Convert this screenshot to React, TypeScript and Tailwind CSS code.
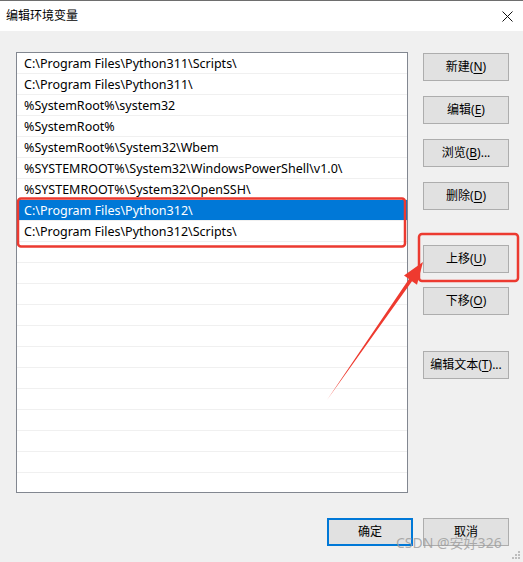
import React from 'react';

const paths = [
  'C:\\Program Files\\Python311\\Scripts\\',
  'C:\\Program Files\\Python311\\',
  '%SystemRoot%\\system32',
  '%SystemRoot%',
  '%SystemRoot%\\System32\\Wbem',
  '%SYSTEMROOT%\\System32\\WindowsPowerShell\\v1.0\\',
  '%SYSTEMROOT%\\System32\\OpenSSH\\',
  'C:\\Program Files\\Python312\\',
  'C:\\Program Files\\Python312\\Scripts\\',
];

const SELECTED = 7;

function Btn({ label, keyChar, tail = '', primary = false }: { label: string; keyChar?: string; tail?: string; primary?: boolean }) {
  return (
    <button
      className={`h-[28px] w-[86px] flex items-center justify-center bg-[#e1e1e1] text-[12px] text-black ${
        primary ? 'border-2 border-[#0078d7]' : 'border border-[#adadad]'
      }`}
    >
      {label}
      {keyChar && (
        <>
          (<span className="underline underline-offset-2">{keyChar}</span>){tail}
        </>
      )}
    </button>
  );
}

export default function App() {
  const rows = Array.from({ length: 21 }, (_, i) => paths[i] ?? '');

  return (
    <div
      className="relative w-[523px] h-[562px] bg-[#f0f0f0] overflow-hidden select-none"
      style={{ fontFamily: '"Noto Sans", "Noto Sans CJK SC", sans-serif' }}
    >
      {/* title bar */}
      <div className="h-[31px] bg-white border-t border-[#6e6e6e] flex items-center justify-between pl-[6px] pr-[10px]">
        <span className="text-[12px] text-black leading-none">编辑环境变量</span>
        <svg width="11" height="11" viewBox="0 0 11 11">
          <path d="M0.5 0.5 L10.5 10.5 M10.5 0.5 L0.5 10.5" stroke="#111" strokeWidth="1" />
        </svg>
      </div>

      <div className="flex pl-[16px] pt-[21px] gap-[15px]">
        {/* path list */}
        <div className="w-[392px] h-[441px] bg-white border border-[#828790] overflow-hidden">
          {rows.map((p, i) => (
            <div
              key={i}
              className={`h-[21px] flex items-center pl-[7px] pt-[2px] text-[12.5px] border-b border-[#f0f0f0] whitespace-nowrap ${
                i === SELECTED ? 'bg-[#0078d7] text-white' : 'text-black'
              }`}
            >
              {p}
            </div>
          ))}
        </div>

        {/* side buttons */}
        <div className="flex flex-col pt-[1px]">
          <div className="flex flex-col gap-[15px]">
            <Btn label="新建" keyChar="N" />
            <Btn label="编辑" keyChar="E" />
            <Btn label="浏览" keyChar="B" tail="..." />
            <Btn label="删除" keyChar="D" />
          </div>
          <div className="flex flex-col gap-[14px] mt-[35px]">
            <Btn label="上移" keyChar="U" />
            <Btn label="下移" keyChar="O" />
          </div>
          <div className="mt-[36px]">
            <Btn label="编辑文本" keyChar="T" tail="..." />
          </div>
        </div>
      </div>

      {/* bottom buttons */}
      <div className="flex justify-end gap-[10px] pr-[14px] mt-[25px]">
        <Btn label="确定" primary />
        <Btn label="取消" />
      </div>

      {/* annotations */}
      <svg className="absolute inset-0 pointer-events-none" width="523" height="562" viewBox="0 0 523 562">
        <rect x="18" y="198.5" width="387" height="48" rx="3" fill="none" stroke="#ec3a30" strokeWidth="2.5" />
        <rect x="419" y="234" width="99" height="47" rx="3" fill="none" stroke="#ec3a30" strokeWidth="2.5" />
        <polygon
          points="327,400 409,279 404,275.5 423,262 417,284.7 412,281.2"
          fill="#ee3a2f"
        />
      </svg>

      {/* watermark */}
      <div className="absolute left-[396px] top-[536px] text-[14px] leading-none text-[#9a9a9a]/80 pointer-events-none">
        CSDN @安好326
      </div>

      {/* resize grip */}
      <svg className="absolute right-[2px] bottom-[2px]" width="10" height="10" viewBox="0 0 10 10">
        <rect x="7" y="1" width="2" height="2" fill="#bdbdbd" />
        <rect x="4" y="4" width="2" height="2" fill="#bdbdbd" />
        <rect x="7" y="4" width="2" height="2" fill="#bdbdbd" />
        <rect x="1" y="7" width="2" height="2" fill="#bdbdbd" />
        <rect x="4" y="7" width="2" height="2" fill="#bdbdbd" />
        <rect x="7" y="7" width="2" height="2" fill="#bdbdbd" />
      </svg>
    </div>
  );
}
